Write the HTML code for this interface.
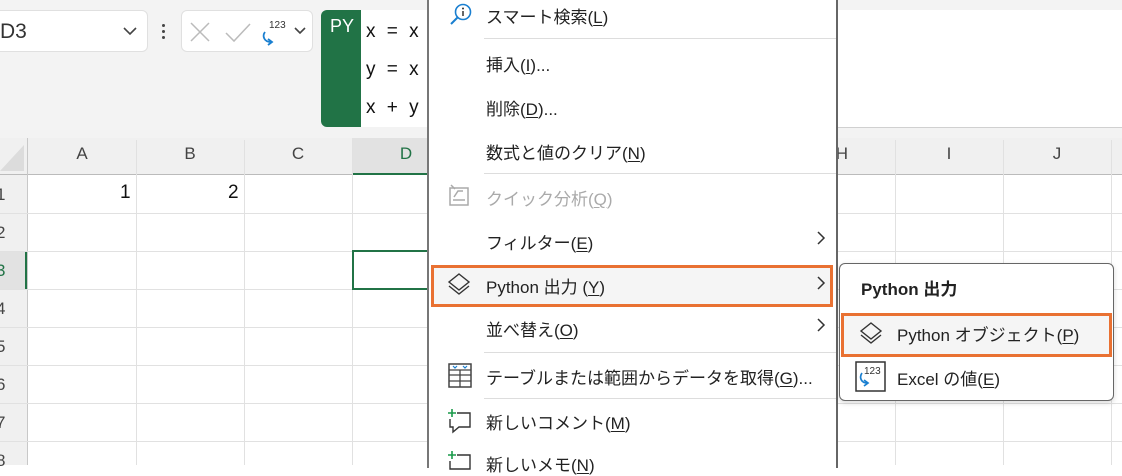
<!DOCTYPE html><html><head><meta charset="utf-8"><style>
*{margin:0;padding:0;box-sizing:border-box}
body{width:1122px;height:465px;overflow:hidden;position:relative;background:#fff;font-family:"Liberation Sans","Noto Sans CJK JP",sans-serif;color:#222}
.a{position:absolute}
.t{font-size:17px;white-space:nowrap}
.hl{position:absolute;height:1px;background:#e1e1e1}
.vl{position:absolute;width:1px;background:#e1e1e1}
.hd{position:absolute;font-size:17px;color:#444;text-align:center}
.mi{position:absolute;left:486px;font-size:17px;white-space:nowrap;color:#222}
u{text-decoration:underline;text-underline-offset:2px}
.sep{position:absolute;left:484px;width:352px;height:1px;background:#ddd}
</style></head><body>
<div class="a" style="left:0;top:0;width:1122px;height:128px;background:#f3f3f3"></div>
<div class="a" style="left:-10px;top:10px;width:158px;height:42px;background:#fff;border:1px solid #e0e0e0;border-radius:6px"></div>
<div class="a t" style="left:0;top:20px;font-size:21px;color:#333">D3</div>
<svg class="a" style="left:122px;top:26px" width="16" height="10"><path d="M2 2l6 6 6-6" fill="none" stroke="#444" stroke-width="1.6"/></svg>
<div class="a" style="left:162px;top:24px;width:3px;height:3px;background:#444;border-radius:2px;box-shadow:0 6px 0 #444,0 12px 0 #444"></div>
<div class="a" style="left:181px;top:10px;width:132px;height:42px;background:#fff;border:1px solid #e0e0e0;border-radius:6px"></div>
<svg class="a" style="left:188px;top:20px" width="24" height="24"><path d="M3 3l18 18M21 3L3 21" stroke="#bbb" stroke-width="1.5"/></svg>
<svg class="a" style="left:224px;top:20px" width="28" height="24"><path d="M2 13l8 8L26 4" fill="none" stroke="#bbb" stroke-width="1.5"/></svg>
<svg class="a" style="left:260px;top:18px" width="30" height="28"><path d="M5 14c-3 4-1 10 6 10" fill="none" stroke="#1a7fd0" stroke-width="1.8"/><path d="M8 21l4 3-4 3" fill="none" stroke="#1a7fd0" stroke-width="1.8"/><text x="9" y="10" font-size="10" fill="#333" font-family="Liberation Sans">123</text></svg>
<svg class="a" style="left:293px;top:26px" width="14" height="10"><path d="M2 2l5 5 5-5" fill="none" stroke="#444" stroke-width="1.6"/></svg>
<div class="a" style="left:321px;top:10px;width:110px;height:117px;background:#fff;border-radius:6px 0 0 6px;overflow:hidden"><div style="width:40px;height:117px;background:#217346"></div></div>
<div class="a t" style="left:330px;top:16px;color:#fff;font-size:18px">PY</div>
<div class="a t" style="left:366px;top:13px;font-size:19px;word-spacing:6px;line-height:38px;color:#111">x = x<br>y = x<br>x + y</div>
<div class="a" style="left:836px;top:10px;width:286px;height:117px;background:#fff"></div>
<div class="a" style="left:0;top:128px;width:1122px;height:10px;background:#f3f3f3"></div>
<div class="a" style="left:0;top:138px;width:1122px;height:37px;background:#f0f0f0"></div>
<div class="a" style="left:836px;top:127px;width:286px;height:1px;background:#d0d0d0"></div>
<div class="a" style="left:0;top:175px;width:27px;height:290px;background:#f0f0f0"></div>
<div class="a" style="left:0;top:174px;width:1122px;height:1px;background:#bbb"></div>
<div class="a" style="left:27px;top:138px;width:1px;height:327px;background:#c8c8c8"></div>
<div class="a" style="left:352px;top:138px;width:76px;height:37px;background:#e2e2e2;border-bottom:2px solid #217346"></div>
<div class="a" style="left:0;top:251px;width:27px;height:38px;background:#e2e2e2;border-right:2px solid #217346"></div>
<svg class="a" style="left:0;top:143px" width="26" height="30"><path d="M24 2V28H0z" fill="#dcdcdc"/></svg>
<div class="hd" style="left:28px;width:108px;top:144px">A</div>
<div class="hd" style="left:136px;width:108px;top:144px">B</div>
<div class="hd" style="left:244px;width:108px;top:144px">C</div>
<div class="hd" style="left:352px;width:108px;top:144px;color:#217346">D</div>
<div class="hd" style="left:800px;width:48px;top:144px;text-align:right">H</div>
<div class="hd" style="left:895px;width:108px;top:144px">I</div>
<div class="hd" style="left:1003px;width:108px;top:144px">J</div>
<div class="vl" style="left:136px;top:140px;height:325px"></div>
<div class="vl" style="left:244px;top:140px;height:325px"></div>
<div class="vl" style="left:352px;top:140px;height:325px"></div>
<div class="vl" style="left:895px;top:140px;height:325px"></div>
<div class="vl" style="left:1003px;top:140px;height:325px"></div>
<div class="vl" style="left:1111px;top:140px;height:325px"></div>
<div class="hl" style="left:0;width:1122px;top:213px"></div>
<div class="hl" style="left:0;width:1122px;top:251px"></div>
<div class="hl" style="left:0;width:1122px;top:289px"></div>
<div class="hl" style="left:0;width:1122px;top:327px"></div>
<div class="hl" style="left:0;width:1122px;top:365px"></div>
<div class="hl" style="left:0;width:1122px;top:403px"></div>
<div class="hl" style="left:0;width:1122px;top:441px"></div>
<div class="hd" style="left:-4px;top:185px">1</div>
<div class="hd" style="left:-4px;top:223px">2</div>
<div class="hd" style="left:-4px;top:261px;color:#217346">3</div>
<div class="hd" style="left:-4px;top:299px">4</div>
<div class="hd" style="left:-4px;top:337px">5</div>
<div class="hd" style="left:-4px;top:375px">6</div>
<div class="hd" style="left:-4px;top:413px">7</div>
<div class="hd" style="left:-4px;top:451px">8</div>
<div class="a t" style="left:120px;top:182px;font-size:19px;color:#111">1</div>
<div class="a t" style="left:228px;top:182px;font-size:19px;color:#111">2</div>
<div class="a" style="left:352px;top:250px;width:78px;height:40px;border:2px solid #217346"></div>
<div class="a" style="left:427px;top:-2px;width:411px;height:470px;background:#fff;border-left:2px solid #777;border-right:2px solid #666"></div>
<svg class="a" style="left:448px;top:2px" width="26" height="26"><circle cx="15" cy="10" r="7.5" fill="none" stroke="#1a7fd0" stroke-width="1.6"/><path d="M9.5 15.5L3 22" stroke="#1a7fd0" stroke-width="2"/><path d="M15 9v5" stroke="#333" stroke-width="1.5"/><circle cx="15" cy="6.5" r="1" fill="#333"/></svg>
<div class="mi" style="top:3px">スマート検索(<u>L</u>)</div>
<div class="sep" style="top:38px"></div>
<div class="mi" style="top:51px">挿入(<u>I</u>)...</div>
<div class="mi" style="top:95px">削除(<u>D</u>)...</div>
<div class="mi" style="top:139px">数式と値のクリア(<u>N</u>)</div>
<div class="sep" style="top:173px"></div>
<svg class="a" style="left:447px;top:183px" width="26" height="26"><rect x="3" y="5" width="18" height="17" fill="none" stroke="#aaa" stroke-width="1.5"/><path d="M6 17h12M7 14l4-6h5" fill="none" stroke="#aaa" stroke-width="1.5"/><path d="M4 2l4 4" stroke="#aaa" stroke-width="1.5"/></svg>
<div class="mi" style="top:185px;color:#aaa">クイック分析(<u>Q</u>)</div>
<div class="mi" style="top:229px">フィルター(<u>E</u>)</div>
<svg class="a" style="left:815px;top:230px" width="12" height="16"><path d="M3 2l6 6-6 6" fill="none" stroke="#333" stroke-width="1.5"/></svg>
<div class="a" style="left:431px;top:265px;width:402px;height:42px;background:#f5f5f5;border:3px solid #e97132"></div>
<svg class="a" style="left:446px;top:271px" width="26" height="26"><path d="M13 3l10 8-10 8-10-8z" fill="none" stroke="#333" stroke-width="1.4"/><path d="M3 15l10 8 10-8" fill="none" stroke="#333" stroke-width="1.4"/></svg>
<div class="mi" style="top:273px">Python 出力 (<u>Y</u>)</div>
<svg class="a" style="left:815px;top:275px" width="12" height="16"><path d="M3 2l6 6-6 6" fill="none" stroke="#333" stroke-width="1.5"/></svg>
<div class="mi" style="top:316px">並べ替え(<u>O</u>)</div>
<svg class="a" style="left:815px;top:317px" width="12" height="16"><path d="M3 2l6 6-6 6" fill="none" stroke="#333" stroke-width="1.5"/></svg>
<div class="sep" style="top:352px"></div>
<svg class="a" style="left:447px;top:362px" width="26" height="28"><rect x="2" y="2" width="22" height="23" fill="none" stroke="#444" stroke-width="1.5"/><path d="M2 8h22M2 13h22M2 19h22M13 8v17" stroke="#444" stroke-width="1.3"/><path d="M6 4l2 2 2-2M16 4l2 2 2-2" stroke="#1a7fd0" stroke-width="1.2" fill="none"/></svg>
<div class="mi" style="top:364px">テーブルまたは範囲からデータを取得(<u>G</u>)...</div>
<div class="sep" style="top:398px"></div>
<svg class="a" style="left:447px;top:408px" width="26" height="26"><path d="M10 5h13v14H12l-6 5v-5H3v-8" fill="none" stroke="#333" stroke-width="1.4"/><path d="M5 1v8M1 5h8" stroke="#1a9a4a" stroke-width="1.6"/></svg>
<div class="mi" style="top:409px">新しいコメント(<u>M</u>)</div>
<svg class="a" style="left:447px;top:450px" width="26" height="20"><path d="M10 5h13v14H3v-8" fill="none" stroke="#333" stroke-width="1.4"/><path d="M5 1v8M1 5h8" stroke="#1a9a4a" stroke-width="1.6"/></svg>
<div class="mi" style="top:451px">新しいメモ(<u>N</u>)</div>
<div class="a" style="left:839px;top:263px;width:275px;height:138px;background:#fff;border:1.5px solid #666;border-radius:6px;box-shadow:0 2px 6px rgba(0,0,0,.15)"></div>
<div class="a t" style="left:861px;top:275px;font-weight:bold;color:#222">Python 出力</div>
<div class="a" style="left:841px;top:313px;width:271px;height:44px;background:#f5f5f5;border:3px solid #e97132"></div>
<svg class="a" style="left:858px;top:320px" width="26" height="26"><path d="M13 3l10 8-10 8-10-8z" fill="none" stroke="#333" stroke-width="1.4"/><path d="M3 15l10 8 10-8" fill="none" stroke="#333" stroke-width="1.4"/></svg>
<div class="a t" style="left:897px;top:321px">Python オブジェクト(<u>P</u>)</div>
<svg class="a" style="left:855px;top:361px" width="32" height="32"><rect x="1" y="1" width="29" height="29" fill="none" stroke="#333" stroke-width="1.5"/><text x="9" y="13" font-size="10" fill="#333" font-family="Liberation Sans">123</text><path d="M7 12c-3 4-1 10 5 10" fill="none" stroke="#1a7fd0" stroke-width="1.7"/><path d="M9 19l4 3-4 3" fill="none" stroke="#1a7fd0" stroke-width="1.7"/></svg>
<div class="a t" style="left:897px;top:365px">Excel の値(<u>E</u>)</div>
</body></html>
